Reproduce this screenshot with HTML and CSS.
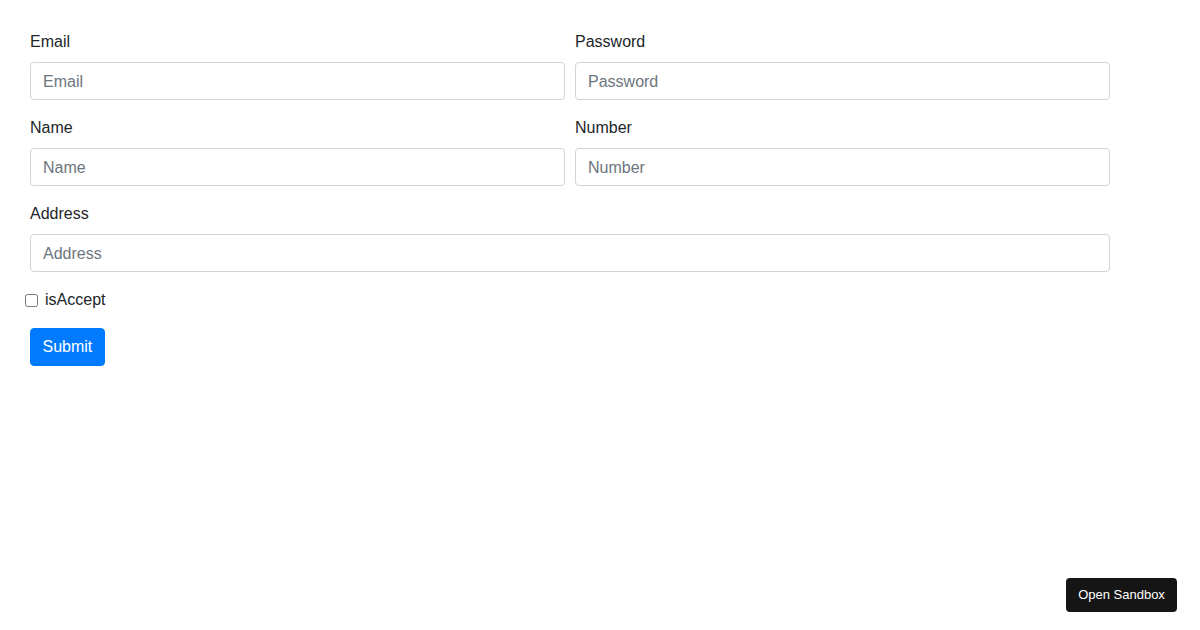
FILE: index.html
```html
<!DOCTYPE html>
<html>
<head>
<meta charset="utf-8">
<link rel="stylesheet" href="styles.css">
</head>
<body>
<form class="form">
  <div class="row">
    <div class="group">
      <label class="label">Email</label>
      <input class="control" type="email" placeholder="Email">
    </div>
    <div class="group">
      <label class="label">Password</label>
      <input class="control" type="password" placeholder="Password">
    </div>
  </div>
  <div class="row">
    <div class="group">
      <label class="label">Name</label>
      <input class="control" type="text" placeholder="Name">
    </div>
    <div class="group">
      <label class="label">Number</label>
      <input class="control" type="text" placeholder="Number">
    </div>
  </div>
  <div class="group">
    <label class="label">Address</label>
    <input class="control" type="text" placeholder="Address">
  </div>
  <div class="check">
    <input class="check-input" type="checkbox" id="acc">
    <label class="check-label" for="acc">isAccept</label>
  </div>
  <button class="btn" type="button">Submit</button>
</form>
<a class="sandbox">Open Sandbox</a>
</body>
</html>
```

FILE: styles.css
```css
* { box-sizing: border-box; }
html, body { margin: 0; padding: 0; }
body {
  font-family: "Liberation Sans", Arial, sans-serif;
  font-size: 16px;
  line-height: 24px;
  color: #212529;
  background: #fff;
  width: 1200px;
  height: 630px;
  position: relative;
}
.form {
  width: 1080px;
  margin-left: 30px;
  padding-top: 30px;
}
.row {
  display: grid;
  grid-template-columns: 1fr 1fr;
  column-gap: 10px;
}
.group {
  margin-bottom: 16px;
}
.label {
  display: block;
  margin-bottom: 8px;
  height: 24px;
}
.control {
  display: block;
  width: 100%;
  height: 38px;
  padding: 7px 12px 5px;
  font-family: inherit;
  font-size: 16px;
  line-height: 24px;
  color: #495057;
  background: #fff;
  border: 1px solid #ced4da;
  border-radius: 4px;
  outline: none;
}
.control::placeholder { color: #6c757d; opacity: 1; }
.check {
  display: flex;
  align-items: center;
  height: 24px;
  margin-left: -5px;
  margin-bottom: 16px;
}
.check-input {
  margin: 0 7px 0 0;
  width: 13px;
  height: 13px;
}
.check-label { line-height: 24px; }
.btn {
  display: block;
  height: 38px;
  padding: 6px 11.5px;
  font-family: inherit;
  font-size: 16px;
  line-height: 24px;
  color: #fff;
  background: #007bff;
  border: 1px solid #007bff;
  border-radius: 4px;
}
.sandbox {
  position: absolute;
  left: 1066px;
  top: 578px;
  width: 111px;
  height: 34px;
  background: #151515;
  color: #fff;
  font-size: 13px;
  line-height: 34px;
  text-align: center;
  border-radius: 4px;
}
```
